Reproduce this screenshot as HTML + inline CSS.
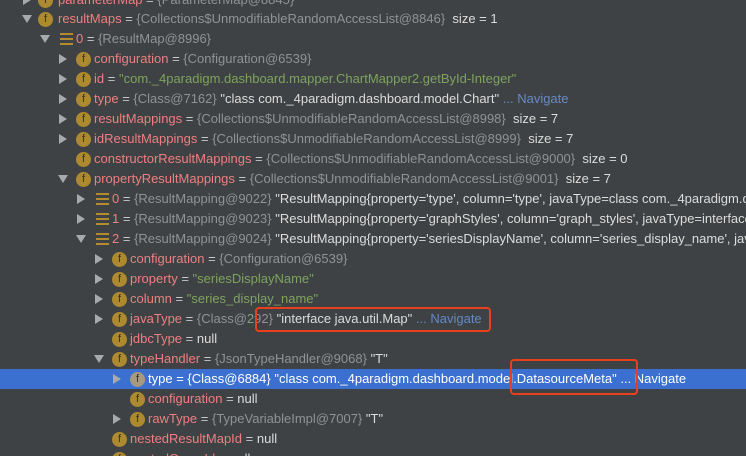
<!DOCTYPE html>
<html><head><meta charset="utf-8">
<style>
*{margin:0;padding:0;box-sizing:border-box}
html{width:746px;height:456px;overflow:hidden}
body{width:746px;height:456px;overflow:hidden;background:#3f4244;font-family:"Liberation Sans",Helvetica,Arial,sans-serif;font-size:13px;position:relative}
.r{position:absolute;left:0;width:746px;height:20px;line-height:20px;white-space:nowrap;overflow:hidden}
.sel{background:#3b6fd0}
.a{position:absolute;top:5px;width:10px;height:10px}
.ic{position:absolute;top:3px;width:15px;height:15px;border-radius:50%;background:#ad892f;color:#3a3426;font-size:11px;line-height:15px;text-align:center;font-family:"Liberation Sans",sans-serif}
.ls{position:absolute;top:4px;width:13px;height:12px}
.ls i{display:block;height:2px;background:#b38c30;margin-bottom:3px}
.t{position:absolute;top:0}
.n{color:#ee7f82}
.e{color:#c8c8c8}
.g{color:#8f9396}
.s{color:#7ea35e}
.w{color:#dcdcdc}
.v{color:#6689c4}
.sel .n,.sel .e,.sel .g,.sel .w{color:#fff}
.box{position:absolute;border:2px solid #e8401c;border-radius:4px}
</style></head><body>

<svg width="0" height="0" style="position:absolute"><defs>
<polygon id="rt" points="1,0 9,5 1,10" fill="#a7a9ab"/>
<polygon id="dn" points="0,1 10,1 5,9" fill="#a7a9ab"/>
</defs></svg>

<div class="r" style="top:-10px"><svg class="a" style="left:22px" viewBox="0 0 10 10"><use href="#rt"/></svg><div class="ic" style="left:38px">f</div><span class="t" style="left:58px"><span class="n">parameterMap</span> <span class="e">=</span> <span class="g">{ParameterMap@8845}</span></span></div>

<div class="r" style="top:9px"><svg class="a" style="left:22px" viewBox="0 0 10 10"><use href="#dn"/></svg><div class="ic" style="left:38px">f</div><span class="t" style="left:58px"><span class="n">resultMaps</span> <span class="e">=</span> <span class="g">{Collections$UnmodifiableRandomAccessList@8846}</span> <span class="w">&nbsp;size = 1</span></span></div>

<div class="r" style="top:29px"><svg class="a" style="left:40px" viewBox="0 0 10 10"><use href="#dn"/></svg><div class="ls" style="left:60px"><i></i><i></i><i></i></div><span class="t" style="left:76px"><span class="n">0</span> <span class="e">=</span> <span class="g">{ResultMap@8996}</span></span></div>

<div class="r" style="top:49px"><svg class="a" style="left:58px" viewBox="0 0 10 10"><use href="#rt"/></svg><div class="ic" style="left:76px">f</div><span class="t" style="left:94px"><span class="n">configuration</span> <span class="e">=</span> <span class="g">{Configuration@6539}</span></span></div>

<div class="r" style="top:69px"><svg class="a" style="left:58px" viewBox="0 0 10 10"><use href="#rt"/></svg><div class="ic" style="left:76px">f</div><span class="t" style="left:94px"><span class="n">id</span> <span class="e">=</span> <span class="s">"com._4paradigm.dashboard.mapper.ChartMapper2.getById-Integer"</span></span></div>

<div class="r" style="top:89px"><svg class="a" style="left:58px" viewBox="0 0 10 10"><use href="#rt"/></svg><div class="ic" style="left:76px">f</div><span class="t" style="left:94px"><span class="n">type</span> <span class="e">=</span> <span class="g">{Class@7162}</span> <span class="w">"class com._4paradigm.dashboard.model.Chart"</span> <span class="v">... Navigate</span></span></div>

<div class="r" style="top:109px"><svg class="a" style="left:58px" viewBox="0 0 10 10"><use href="#rt"/></svg><div class="ic" style="left:76px">f</div><span class="t" style="left:94px"><span class="n">resultMappings</span> <span class="e">=</span> <span class="g">{Collections$UnmodifiableRandomAccessList@8998}</span> <span class="w">&nbsp;size = 7</span></span></div>

<div class="r" style="top:129px"><svg class="a" style="left:58px" viewBox="0 0 10 10"><use href="#rt"/></svg><div class="ic" style="left:76px">f</div><span class="t" style="left:94px"><span class="n">idResultMappings</span> <span class="e">=</span> <span class="g">{Collections$UnmodifiableRandomAccessList@8999}</span> <span class="w">&nbsp;size = 7</span></span></div>

<div class="r" style="top:149px"><div class="ic" style="left:76px">f</div><span class="t" style="left:94px"><span class="n">constructorResultMappings</span> <span class="e">=</span> <span class="g">{Collections$UnmodifiableRandomAccessList@9000}</span> <span class="w">&nbsp;size = 0</span></span></div>

<div class="r" style="top:169px"><svg class="a" style="left:58px" viewBox="0 0 10 10"><use href="#dn"/></svg><div class="ic" style="left:76px">f</div><span class="t" style="left:94px"><span class="n">propertyResultMappings</span> <span class="e">=</span> <span class="g">{Collections$UnmodifiableRandomAccessList@9001}</span> <span class="w">&nbsp;size = 7</span></span></div>

<div class="r" style="top:189px"><svg class="a" style="left:76px" viewBox="0 0 10 10"><use href="#rt"/></svg><div class="ls" style="left:96px"><i></i><i></i><i></i></div><span class="t" style="left:112px"><span class="n">0</span> <span class="e">=</span> <span class="g">{ResultMapping@9022}</span> <span class="w">"ResultMapping{property='type', column='type', javaType=class com._4paradigm.dashboard</span></span></div>

<div class="r" style="top:209px"><svg class="a" style="left:76px" viewBox="0 0 10 10"><use href="#rt"/></svg><div class="ls" style="left:96px"><i></i><i></i><i></i></div><span class="t" style="left:112px"><span class="n">1</span> <span class="e">=</span> <span class="g">{ResultMapping@9023}</span> <span class="w">"ResultMapping{property='graphStyles', column='graph_styles', javaType=interface java</span></span></div>

<div class="r" style="top:229px"><svg class="a" style="left:76px" viewBox="0 0 10 10"><use href="#dn"/></svg><div class="ls" style="left:96px"><i></i><i></i><i></i></div><span class="t" style="left:112px"><span class="n">2</span> <span class="e">=</span> <span class="g">{ResultMapping@9024}</span> <span class="w">"ResultMapping{property='seriesDisplayName', column='series_display_name', javaType</span></span></div>

<div class="r" style="top:249px"><svg class="a" style="left:94px" viewBox="0 0 10 10"><use href="#rt"/></svg><div class="ic" style="left:112px">f</div><span class="t" style="left:130px"><span class="n">configuration</span> <span class="e">=</span> <span class="g">{Configuration@6539}</span></span></div>

<div class="r" style="top:269px"><svg class="a" style="left:94px" viewBox="0 0 10 10"><use href="#rt"/></svg><div class="ic" style="left:112px">f</div><span class="t" style="left:130px"><span class="n">property</span> <span class="e">=</span> <span class="s">"seriesDisplayName"</span></span></div>

<div class="r" style="top:289px"><svg class="a" style="left:94px" viewBox="0 0 10 10"><use href="#rt"/></svg><div class="ic" style="left:112px">f</div><span class="t" style="left:130px"><span class="n">column</span> <span class="e">=</span> <span class="s">"series_display_name"</span></span></div>

<div class="r" style="top:309px"><svg class="a" style="left:94px" viewBox="0 0 10 10"><use href="#rt"/></svg><div class="ic" style="left:112px">f</div><span class="t" style="left:130px"><span class="n">javaType</span> <span class="e">=</span> <span class="g">{Class@292}</span> <span class="w">"interface java.util.Map"</span> <span class="v">... Navigate</span></span></div>

<div class="r" style="top:329px"><div class="ic" style="left:112px">f</div><span class="t" style="left:130px"><span class="n">jdbcType</span> <span class="e">=</span> <span class="w">null</span></span></div>

<div class="r" style="top:349px"><svg class="a" style="left:94px" viewBox="0 0 10 10"><use href="#dn"/></svg><div class="ic" style="left:112px">f</div><span class="t" style="left:130px"><span class="n">typeHandler</span> <span class="e">=</span> <span class="g">{JsonTypeHandler@9068}</span> <span class="w">"T"</span></span></div>

<div class="r sel" style="top:369px"><svg class="a" style="left:112px" viewBox="0 0 10 10"><use href="#rt"/></svg><div class="ic" style="left:130px;background:#a89a80">f</div><span class="t" style="left:148px"><span class="n">type</span> <span class="e">=</span> <span class="g">{Class@6884}</span> <span class="w">"class com._4paradigm.dashboard.model.DatasourceMeta"</span> <span class="w">... Navigate</span></span></div>

<div class="r" style="top:389px"><div class="ic" style="left:130px">f</div><span class="t" style="left:148px"><span class="n">configuration</span> <span class="e">=</span> <span class="w">null</span></span></div>

<div class="r" style="top:409px"><svg class="a" style="left:112px" viewBox="0 0 10 10"><use href="#rt"/></svg><div class="ic" style="left:130px">f</div><span class="t" style="left:148px"><span class="n">rawType</span> <span class="e">=</span> <span class="g">{TypeVariableImpl@7007}</span> <span class="w">"T"</span></span></div>

<div class="r" style="top:429px"><div class="ic" style="left:112px">f</div><span class="t" style="left:130px"><span class="n">nestedResultMapId</span> <span class="e">=</span> <span class="w">null</span></span></div>

<div class="r" style="top:449px;height:7px"><div class="ic" style="left:112px">f</div><span class="t" style="left:130px"><span class="n">nestedQueryId</span> <span class="e">=</span> <span class="w">null</span></span></div>

<div class="box" style="left:255px;top:307px;width:236px;height:25px"></div>
<div class="box" style="left:510px;top:359px;width:128px;height:36px"></div>
</body></html>
